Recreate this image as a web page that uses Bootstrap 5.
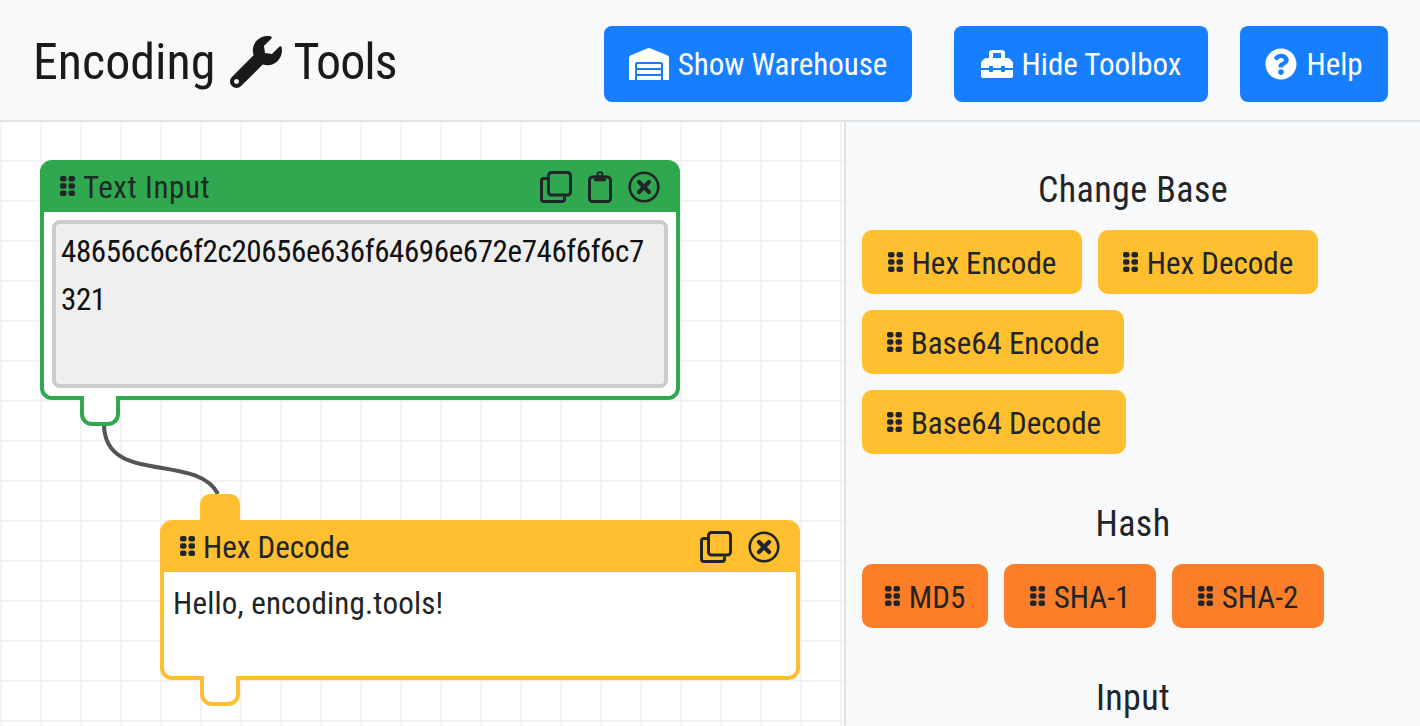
<!DOCTYPE html>
<html lang="en"><head><meta charset="utf-8"><title>Encoding Tools</title>
<link href="https://cdn.jsdelivr.net/npm/bootstrap@5.3.0/dist/css/bootstrap.min.css" rel="stylesheet">
<style>
body{font-family:"Roboto Condensed","Liberation Sans",sans-serif;color:#212529;background:#f8f9fa;overflow:hidden}
.app-shell{height:726px;overflow:hidden}
.app-head{height:122px;border-bottom:2px solid #dfe2e6;padding:4px 32px 0 33px;background:#f8f9fa}
.app-title{font-size:50px;line-height:60px;margin:0;font-weight:400;color:#1a1a1a;display:flex;align-items:center;gap:14px}
.app-title span:first-child{margin-right:1px}
.app-title svg{width:52px;height:52px;fill:#1a1a1a}
.title-tail{letter-spacing:-1px;margin-left:-3px}
.top-row{margin-top:4px}
.top-btn{height:76px;border-radius:8px;background:#177fff;border:0;color:#fff;font-size:31px;display:flex;align-items:center;justify-content:center;gap:9px;padding:0;line-height:1}
.top-btn svg{fill:#fff}
.top-w{width:308px;margin-right:42px}.top-t{width:254px;margin-right:32px}.top-h{width:148px}
.work-row{height:604px;overflow:hidden}
.canvas-area{width:846px;height:604px;border-right:2px solid #dfe2e6;position:relative;background-color:#fff;background-image:linear-gradient(#f3f3f5 2px,transparent 2px),linear-gradient(90deg,#f3f3f5 2px,transparent 2px);background-size:40px 40px;background-position:0 -2px}
.wire{position:absolute;left:0;top:0;width:844px;height:604px}
.flow-node{position:absolute;width:640px;border:4px solid;border-radius:12px;background:#fff}
.node-a{left:40px;top:38px;height:240px;border-color:#2fa84f}
.node-b{left:160px;top:398px;height:160px;border-color:#ffbf2e}
.node-head{height:48px;display:flex;align-items:center;padding:0 16px 4px 16px;font-size:31px;line-height:1}
.node-title{position:relative;top:1px}
.node-a .node-head{background:#2fa84f;color:#1d2b26;letter-spacing:.6px}
.node-b .node-head{background:#ffbf2e}
.grip{width:15px;height:20px;fill:#212529;flex:none;margin-right:9px}
.node-head .grip{margin-right:8px}
.node-icons{margin-left:auto;display:flex;align-items:center;gap:16px;margin-top:1px}
.node-icons svg{fill:none;stroke:#212529;height:32px;display:block}
.hex-box{margin:8px 8px 0;height:168px;background:#efefef;border:4px solid #ccc;border-radius:8px;padding:4px 5px;font-size:31px;letter-spacing:-.4px;line-height:48px;color:#111;white-space:nowrap}
.node-out{padding:10px 9px;font-size:31px;line-height:44px;letter-spacing:.2px}
.port{position:absolute;left:36px;width:40px;height:30px}
.port-out{top:100%;border:4px solid;border-top:0;border-radius:0 0 12px 12px;background:#fff}
.node-a .port-out{border-color:#2fa84f}.node-b .port-out{border-color:#ffbf2e}
.port-in{top:-30px;background:#ffbf2e;border-radius:10px 10px 0 0}
.side-pane{width:574px;padding:0 16px}
.pane-title{font-size:36px;line-height:44px;font-weight:400;text-align:center;margin:0 0 18px;letter-spacing:.4px}
.pane-first{margin-top:46px}
.pane-next{margin-top:48px}
.tool-set{display:flex;flex-wrap:wrap;gap:16px;max-width:540px}
.tool-chip{height:64px;border-radius:10px;border:0;font-size:31px;display:flex;align-items:center;justify-content:center;padding:2px 0 0;color:#212529;line-height:1}
.tool-chip .grip{position:relative;top:-1px}
.chip-y{background:#ffbf2e}.chip-o{background:#fd7e28}
.w-220{width:220px}.w-262{width:262px}.w-264{width:264px}.w-126{width:126px}.w-152{width:152px}
</style></head><body>
<svg width="0" height="0" class="d-block" aria-hidden="true"><defs>
<symbol id="g" viewBox="0 0 15 20"><rect x="0" y="0" width="6.5" height="5.6" rx="2"/><rect x="8.5" y="0" width="6.5" height="5.6" rx="2"/><rect x="0" y="7.2" width="6.5" height="5.6" rx="2"/><rect x="8.5" y="7.2" width="6.5" height="5.6" rx="2"/><rect x="0" y="14.4" width="6.5" height="5.6" rx="2"/><rect x="8.5" y="14.4" width="6.5" height="5.6" rx="2"/></symbol>
<symbol id="cp" viewBox="0 0 32 32"><rect x="8.5" y="1.5" width="22" height="22.5" rx="3" stroke-width="3"/><path d="M7 7.5H4A2.5 2.5 0 0 0 1.5 10v18A2.5 2.5 0 0 0 4 30.5h18a2.5 2.5 0 0 0 2.5-2.5v-2.5" stroke-width="3"/></symbol>
<symbol id="xc" viewBox="0 0 32 32"><circle cx="16" cy="16" r="14.3" stroke-width="2.6"/><path d="M11 11l10 10M21 11L11 21" stroke-width="4.2" stroke-linecap="round"/></symbol>
</defs></svg>
<div class="app-shell d-flex flex-column">
<header class="app-head d-flex align-items-center flex-shrink-0">
<h1 class="app-title"><span>Encoding</span><svg viewBox="0 0 512 512"><path d="M507.73 109.1c-2.24-9.03-13.54-12.09-20.12-5.51l-74.36 74.36-67.88-11.31-11.31-67.88 74.36-74.36c6.62-6.62 3.43-17.9-5.66-20.16-47.38-11.74-99.55.91-136.58 37.93-39.64 39.64-50.55 97.1-34.05 147.2L18.74 402.76c-24.99 24.99-24.99 65.51 0 90.5 24.99 24.99 65.51 24.99 90.5 0l213.21-213.21c50.12 16.71 107.47 5.68 147.37-34.22 37.07-37.07 49.7-89.32 37.91-136.73zM64 472c-13.25 0-24-10.75-24-24 0-13.26 10.75-24 24-24s24 10.74 24 24c0 13.25-10.75 24-24 24z"/></svg><span class="title-tail">Tools</span></h1>
<div class="ms-auto d-flex top-row">
<button class="btn top-btn top-w"><svg width="40" height="32" viewBox="0 0 640 512"><path d="M504 352H136.4c-4.4 0-8 3.6-8 8l-.1 48c0 4.4 3.6 8 8 8H504c4.4 0 8-3.6 8-8v-48c0-4.4-3.6-8-8-8zm0 96H136.1c-4.4 0-8 3.6-8 8l-.1 48c0 4.4 3.6 8 8 8h368c4.4 0 8-3.6 8-8v-48c0-4.4-3.6-8-8-8zm0-192H136.6c-4.4 0-8 3.6-8 8l-.1 48c0 4.4 3.6 8 8 8H504c4.4 0 8-3.6 8-8v-48c0-4.4-3.6-8-8-8zm106.5-139L338.4 3.7a48.15 48.15 0 0 0-36.9 0L29.5 117C11.7 124.5 0 141.9 0 161.3V504c0 4.4 3.6 8 8 8h80c4.4 0 8-3.6 8-8V256c0-17.6 14.6-32 32.6-32h382.8c18 0 32.6 14.4 32.6 32v248c0 4.4 3.6 8 8 8h80c4.4 0 8-3.6 8-8V161.3c0-19.4-11.7-36.8-29.5-44.3z"/></svg>Show Warehouse</button>
<button class="btn top-btn top-t"><svg width="32" height="32" viewBox="0 0 512 512"><path d="M502.63 214.63l-45.25-45.25c-6-6-14.14-9.37-22.63-9.37H384V80c0-26.51-21.49-48-48-48H176c-26.51 0-48 21.49-48 48v80H77.25c-8.49 0-16.62 3.37-22.63 9.37L9.37 214.63c-6 6-9.37 14.14-9.37 22.63V320h128v-16c0-8.84 7.16-16 16-16h32c8.84 0 16 7.16 16 16v16h128v-16c0-8.84 7.16-16 16-16h32c8.84 0 16 7.16 16 16v16h128v-82.75c0-8.48-3.37-16.62-9.37-22.62zM320 160H192V80h128v80zm64 208c0 8.84-7.16 16-16 16h-32c-8.84 0-16-7.16-16-16v-16H192v16c0 8.84-7.16 16-16 16h-32c-8.84 0-16-7.16-16-16v-16H0v96c0 17.67 14.33 32 32 32h448c17.67 0 32-14.33 32-32v-96H384v16z"/></svg>Hide Toolbox</button>
<button class="btn top-btn top-h"><svg width="32" height="32" viewBox="0 0 512 512"><path d="M504 256c0 136.997-111.043 248-248 248S8 392.997 8 256C8 119.083 119.043 8 256 8s248 111.083 248 248zM262.655 90c-54.497 0-89.255 22.957-116.549 63.758-3.536 5.286-2.353 12.415 2.715 16.258l34.699 26.31c5.205 3.947 12.621 3.008 16.665-2.122 17.864-22.658 30.113-35.797 57.303-35.797 20.429 0 45.698 13.148 45.698 32.958 0 14.976-12.363 22.667-32.534 33.976C247.128 238.528 216 254.941 216 296v4c0 6.627 5.373 12 12 12h56c6.627 0 12-5.373 12-12v-1.333c0-28.462 83.186-29.647 83.186-106.667 0-58.002-60.165-102-116.531-102zM256 338c-25.365 0-46 20.635-46 46 0 25.364 20.635 46 46 46s46-20.636 46-46c0-25.365-20.635-46-46-46z"/></svg>Help</button>
</div>
</header>
<div class="d-flex work-row">
<main class="canvas-area">
<svg class="wire" viewBox="0 0 844 604"><path d="M104 302C104 364 196 330 218 372" fill="none" stroke="#555" stroke-width="4"/></svg>
<section class="flow-node node-a">
<div class="node-head"><svg class="grip"><use href="#g"/></svg><span class="node-title">Text Input</span><div class="node-icons"><svg width="32"><use href="#cp"/></svg><svg width="24" viewBox="0 0 24 32"><rect x="1.5" y="6" width="21" height="24.5" rx="3" stroke-width="3"/><path d="M7 5.5h10v4H7z" fill="#212529" stroke-width="1.5"/><circle cx="12" cy="3.6" r="2.4" stroke-width="2"/></svg><svg width="32"><use href="#xc"/></svg></div></div>
<div class="hex-box">48656c6c6f2c20656e636f64696e672e746f6f6c7<br>321</div>
<div class="port port-out"></div>
</section>
<section class="flow-node node-b">
<div class="port port-in"></div>
<div class="node-head"><svg class="grip"><use href="#g"/></svg><span class="node-title">Hex Decode</span><div class="node-icons"><svg width="32"><use href="#cp"/></svg><svg width="32"><use href="#xc"/></svg></div></div>
<div class="node-out">Hello, encoding.tools!</div>
<div class="port port-out"></div>
</section>
</main>
<aside class="side-pane">
<h2 class="pane-title pane-first">Change Base</h2>
<div class="tool-set">
<button class="btn tool-chip chip-y w-220"><svg class="grip"><use href="#g"/></svg>Hex Encode</button>
<button class="btn tool-chip chip-y w-220"><svg class="grip"><use href="#g"/></svg>Hex Decode</button>
<button class="btn tool-chip chip-y w-262"><svg class="grip"><use href="#g"/></svg>Base64 Encode</button>
<button class="btn tool-chip chip-y w-264"><svg class="grip"><use href="#g"/></svg>Base64 Decode</button>
</div>
<h2 class="pane-title pane-next">Hash</h2>
<div class="tool-set">
<button class="btn tool-chip chip-o w-126"><svg class="grip"><use href="#g"/></svg>MD5</button>
<button class="btn tool-chip chip-o w-152"><svg class="grip"><use href="#g"/></svg>SHA-1</button>
<button class="btn tool-chip chip-o w-152"><svg class="grip"><use href="#g"/></svg>SHA-2</button>
</div>
<h2 class="pane-title pane-next">Input</h2>
</aside>
</div>
</div>
<script src="https://cdn.jsdelivr.net/npm/bootstrap@5.3.0/dist/js/bootstrap.bundle.min.js"></script>
</body></html>
